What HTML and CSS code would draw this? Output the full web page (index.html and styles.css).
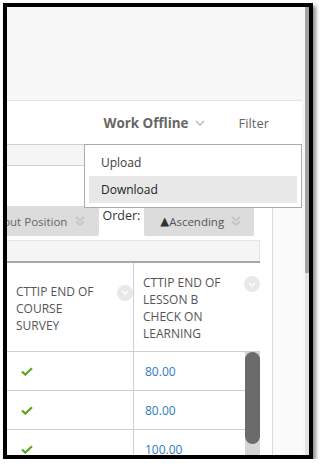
FILE: index.html
```html
<!DOCTYPE html>
<html lang="en">
<head>
<meta charset="utf-8">
<title>Grade Center</title>
<link rel="stylesheet" href="styles.css">
</head>
<body>
<div class="frame">
  <div class="viewport">
    <div class="topbar"></div>
    <div class="toolbar">
      <span class="tool tool-menu">Work Offline
        <svg class="chev" width="10" height="6" viewBox="0 0 10 6"><path d="M1 1 L5 5 L9 1" fill="none" stroke="#bdbdbd" stroke-width="1.6"/></svg>
      </span>
      <span class="tool">Filter</span>
      <ul class="menu">
        <li>Upload</li>
        <li class="active">Download</li>
      </ul>
    </div>
    <div class="band"></div>
    <div class="main">
      <div class="grade">
        <div class="controls">
          <div class="sortbtn">Layout Position
            <svg class="dchev" width="10" height="10" viewBox="0 0 10 10"><path d="M1 1 L5 4.5 L9 1 M1 5.5 L5 9 L9 5.5" fill="none" stroke="#c4c4c4" stroke-width="1.8"/></svg>
          </div>
          <span class="order-label">Order:</span>
          <div class="sortbtn asc"><span class="tri">▲</span>Ascending
            <svg class="dchev" width="10" height="10" viewBox="0 0 10 10"><path d="M1 1 L5 4.5 L9 1 M1 5.5 L5 9 L9 5.5" fill="none" stroke="#c4c4c4" stroke-width="1.8"/></svg>
          </div>
        </div>
        <div class="panel"></div>
        <div class="table">
          <div class="thead">
            <div class="th">
              <div class="th-inner">
                <span class="th-label">CTTIP End of Course Survey</span>
                <span class="th-menu"><svg width="8" height="5" viewBox="0 0 8 5"><path d="M1 1 L4 4 L7 1" fill="none" stroke="#fff" stroke-width="1.5"/></svg></span>
              </div>
            </div>
            <div class="th">
              <div class="th-inner">
                <span class="th-label">CTTIP End of Lesson B Check on Learning</span>
                <span class="th-menu"><svg width="8" height="5" viewBox="0 0 8 5"><path d="M1 1 L4 4 L7 1" fill="none" stroke="#fff" stroke-width="1.5"/></svg></span>
              </div>
            </div>
          </div>
          <div class="tbody">
            <div class="rows">
              <div class="tr">
                <div class="td check"><svg width="12" height="9" viewBox="0 0 12 9"><path d="M1 4.5 L4.3 7.6 L11 1.2" fill="none" stroke="#5ea51f" stroke-width="2.2"/></svg></div>
                <div class="td num">80.00</div>
              </div>
              <div class="tr">
                <div class="td check"><svg width="12" height="9" viewBox="0 0 12 9"><path d="M1 4.5 L4.3 7.6 L11 1.2" fill="none" stroke="#5ea51f" stroke-width="2.2"/></svg></div>
                <div class="td num">80.00</div>
              </div>
              <div class="tr">
                <div class="td check"><svg width="12" height="9" viewBox="0 0 12 9"><path d="M1 4.5 L4.3 7.6 L11 1.2" fill="none" stroke="#5ea51f" stroke-width="2.2"/></svg></div>
                <div class="td num">100.00</div>
              </div>
            </div>
            <div class="tscroll"><div class="tthumb"></div></div>
          </div>
        </div>
      </div>
      <div class="side"><div class="side-inner"></div></div>
    </div>
  </div>
  <div class="vscroll"><div class="vthumb"></div></div>
</div>
</body>
</html>
```

FILE: styles.css
```css
* { box-sizing: border-box; }
html, body { margin: 0; padding: 0; background: #fff; }
body { font-family: "Open Sans", "DejaVu Sans", sans-serif; }

.frame {
  display: flex;
  margin: 3px 0 0 3px;
  width: 310px;
  height: 456px;
  border: 4px solid #000;
  box-shadow: 3px 3px 4px rgba(0, 0, 0, 0.45);
  overflow: hidden;
}

.viewport {
  width: 298px;
  height: 100%;
  display: flex;
  flex-direction: column;
  background: #f7f7f7;
  padding-right: 3px;
  overflow: hidden;
}

.topbar {
  flex: none;
  height: 94px;
  border-bottom: 1px solid #e3e3e3;
}

.toolbar {
  flex: none;
  position: relative;
  height: 44px;
  background: #fff;
  border-bottom: 1px solid #cfcfcf;
  display: flex;
  justify-content: flex-end;
  align-items: center;
  gap: 33px;
  padding-right: 33px;
}

.tool {
  font-size: 13px;
  color: #666;
  white-space: nowrap;
}

.tool-menu {
  display: flex;
  align-items: center;
  gap: 7px;
  font-size: 13.4px;
  font-weight: 700;
}

.menu {
  position: absolute;
  top: 43px;
  left: 77px;
  right: 0;
  margin: 0;
  padding: 4px;
  list-style: none;
  background: #fff;
  border: 1px solid #aaa;
  font-size: 12px;
  z-index: 5;
}

.menu li {
  height: 27px;
  line-height: 27px;
  padding-left: 12px;
  color: #3b3b3b;
}

.menu li.active {
  background: #e8e8e8;
  color: #222;
}

.band {
  flex: none;
  height: 21px;
  background: #f5f5f5;
  border-bottom: 1px solid #d2d2d2;
}

.main {
  flex: 1;
  min-height: 0;
  display: flex;
  background: #fff;
}

.grade {
  flex: 1;
  min-width: 0;
  overflow: hidden;
  padding-top: 40px;
}

.controls {
  display: flex;
  align-items: flex-start;
  height: 30px;
  margin-left: -38px;
}

.sortbtn {
  flex: none;
  display: flex;
  align-items: center;
  height: 30px;
  padding: 0 14px 0 16px;
  background: #dcdcdc;
  border-radius: 0 0 2px 2px;
  font-size: 11.5px;
  color: #666;
  white-space: nowrap;
}

.sortbtn .dchev { margin-left: 8px; }

.sortbtn.asc {
  padding: 0 13px 0 16px;
  color: #555;
}

.sortbtn.asc .dchev { margin-left: 7px; }

.tri {
  font-family: "DejaVu Sans", sans-serif;
  color: #333;
}

.order-label {
  flex: none;
  font-size: 12.5px;
  line-height: 19px;
  color: #333;
  margin: 0 4px 0 3px;
}

.panel {
  height: 21px;
  margin-top: 4px;
  background: #f5f5f5;
  border-top: 1px solid #e4e4e4;
  border-right: 1px solid #e4e4e4;
}

.table {
  margin-left: -1px;
  border-top: 2px solid #a8a8a8;
}

.thead {
  display: grid;
  grid-template-columns: 127px 127px;
  height: 89px;
  border-bottom: 1px solid #cfcfcf;
}

.th {
  display: flex;
  align-items: center;
  padding: 2px 0 0 9px;
  border-left: 1px solid #d0d0d0;
}

.th-inner {
  width: 100%;
  display: flex;
  align-items: flex-start;
  justify-content: space-between;
}

.th-label {
  max-width: 86px;
  font-size: 12px;
  line-height: 17px;
  color: #555;
  text-transform: uppercase;
}

.th-menu {
  flex: none;
  width: 16px;
  height: 16px;
  margin-top: 2px;
  border-radius: 50%;
  background: #e8e8e8;
  display: flex;
  align-items: center;
  justify-content: center;
}

.tbody {
  display: flex;
}

.rows {
  width: 239px;
}

.tr {
  display: grid;
  grid-template-columns: 127px 112px;
  height: 39px;
  border-bottom: 1px solid #cfcfcf;
}

.td {
  display: flex;
  align-items: center;
  border-left: 1px solid #d0d0d0;
}

.td.check { padding-left: 14px; }

.td.num {
  padding-left: 11px;
  font-size: 12px;
  color: #2f7bbf;
}

.tscroll {
  width: 15px;
  height: 104px;
  background: #d6d6d6;
}

.tthumb {
  height: 92px;
  border-radius: 7.5px;
  background: #6b6b6b;
}

.side {
  flex: none;
  width: 42px;
  padding-left: 12px;
  background: #fff;
}

.side-inner {
  height: 100%;
  border-left: 1px solid #dadada;
  background: #fafafa;
}

.vscroll {
  width: 4px;
  background: #e2e2e2;
}

.vthumb {
  height: 266px;
  background: #a2a2a2;
}
```
